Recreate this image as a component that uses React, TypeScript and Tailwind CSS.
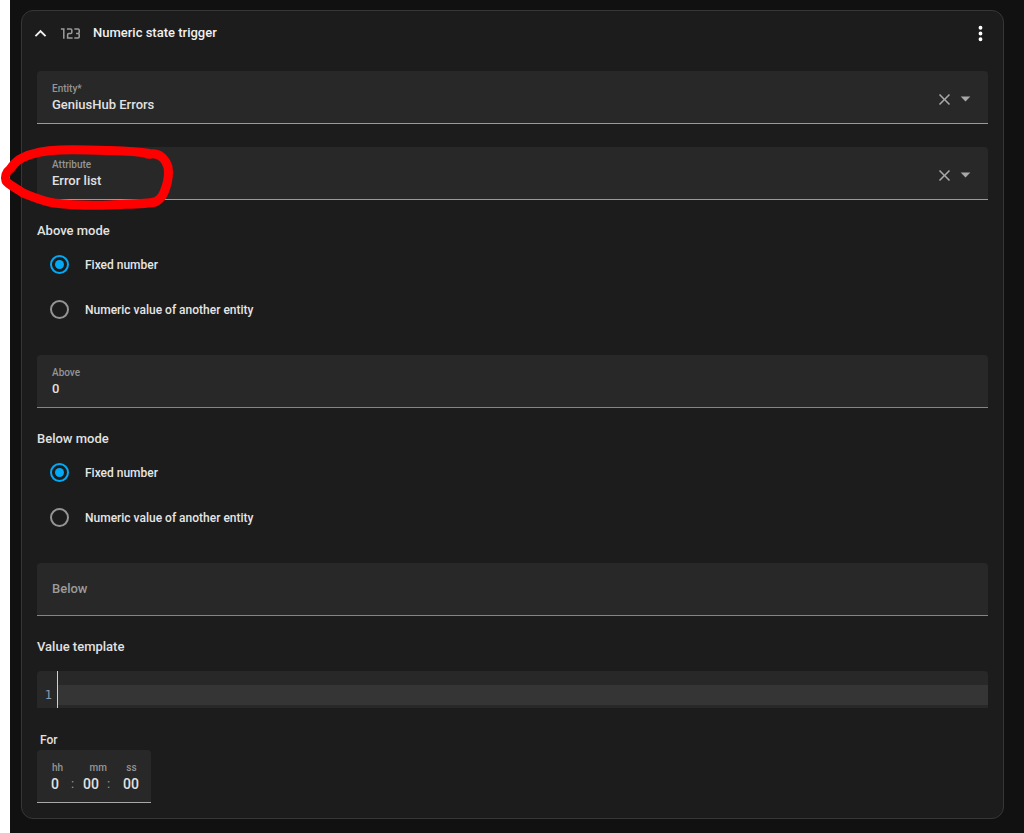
import { useId, useState } from "react";

function Icon({ path, className }: { path: string; className: string }) {
  return (
    <svg viewBox="0 0 24 24" fill="currentColor" aria-hidden="true" className={className}>
      <path d={path} />
    </svg>
  );
}

const icons = {
  chevronUp: "M7.41,15.41L12,10.83L16.59,15.41L18,14L12,8L6,14L7.41,15.41Z",
  dots: "M12,16A2,2 0 0,1 14,18A2,2 0 0,1 12,20A2,2 0 0,1 10,18A2,2 0 0,1 12,16M12,10A2,2 0 0,1 14,12A2,2 0 0,1 12,14A2,2 0 0,1 10,12A2,2 0 0,1 12,10M12,4A2,2 0 0,1 14,6A2,2 0 0,1 12,8A2,2 0 0,1 10,6A2,2 0 0,1 12,4Z",
  close:
    "M19,6.41L17.59,5L12,10.59L6.41,5L5,6.41L10.59,12L5,17.59L6.41,19L12,13.41L17.59,19L19,17.59L13.41,12L19,6.41Z",
  menuDown: "M7,10L12,15L17,10H7Z",
};

function NumericIcon({ className }: { className: string }) {
  return (
    <svg viewBox="0 0 24 24" fill="none" stroke="currentColor" strokeWidth="1.6" aria-hidden="true" className={className}>
      <path d="M2 7.300H5V17.500M8.300 7.300H12.200Q13.400 7.300 13.400 8.500V10.800Q13.400 12 12.200 12H10.200Q9 12 9 13.200V16.700H14.200M16 7.300H19.900Q21.100 7.300 21.100 8.500V10.600Q21.100 11.900 19.600 12H17.800M19.600 12Q21.100 12.100 21.100 13.400V15.500Q21.100 16.700 19.900 16.700H16" />
    </svg>
  );
}

function ComboField({ label, initial }: { label: string; initial: string }) {
  const id = useId();
  const [value, setValue] = useState(initial);
  return (
    <div className="flex h-[53px] items-center rounded-t border-b border-[#9a9a9a] bg-[#282828] pr-[11px] pl-[15px]">
      <div className="flex min-w-0 flex-1 flex-col pb-px">
        <label htmlFor={id} className="text-[10px] leading-4 font-medium text-[#959595]">
          {label}
        </label>
        <input
          id={id}
          value={value}
          onChange={(e) => setValue(e.target.value)}
          className="h-4 w-full bg-transparent text-[13px] leading-4 font-medium text-[#e1e1e1] outline-none"
        />
      </div>
      <button type="button" aria-label="Clear" onClick={() => setValue("")} className="mt-1 text-[#a8a8a8]">
        <Icon path={icons.close} className="size-[19px]" />
      </button>
      <button type="button" aria-label="Open list" className="mt-[3px] text-[#a8a8a8]">
        <Icon path={icons.menuDown} className="size-[23px]" />
      </button>
    </div>
  );
}

function NumberField({ label, initial }: { label: string; initial: string }) {
  const id = useId();
  const [value, setValue] = useState(initial);
  const inputClass =
    "h-4 w-full bg-transparent text-[13px] leading-4 font-medium text-[#e1e1e1] outline-none";
  return (
    <div className="mt-[23px] grid h-[53px] content-center rounded-t border-b border-[#858585] bg-[#282828] px-[15px] pb-px">
      <label
        htmlFor={id}
        className={
          value !== ""
            ? "text-[10px] leading-4 font-medium text-[#959595]"
            : "pointer-events-none col-start-1 row-start-1 text-[13px] leading-4 font-medium text-[#9b9b9b]"
        }
      >
        {label}
      </label>
      <input
        id={id}
        value={value}
        inputMode="numeric"
        onChange={(e) => setValue(e.target.value)}
        className={value !== "" ? inputClass : `col-start-1 row-start-1 ${inputClass}`}
      />
    </div>
  );
}

function ModeGroup({ title, name }: { title: string; name: string }) {
  return (
    <fieldset className="mt-[21px]">
      <legend className="mb-px text-[13px] leading-5 font-medium text-[#e1e1e1]">{title}</legend>
      {["Fixed number", "Numeric value of another entity"].map((option, i) => (
        <label key={option} className="flex h-[45px] items-center gap-4 pl-[13px] text-[12px] font-medium text-[#e6e6e6]">
          <input
            type="radio"
            name={name}
            defaultChecked={i === 0}
            className="grid size-[19px] shrink-0 appearance-none place-items-center rounded-full border-2 border-[#949494] before:size-[9px] before:rounded-full checked:border-[#03a9f4] checked:before:bg-[#03a9f4]"
          />
          {option}
        </label>
      ))}
    </fieldset>
  );
}

function TimePart({
  label,
  name,
  value,
  className,
  align,
}: {
  label: string;
  name: string;
  value: string;
  className: string;
  align: string;
}) {
  return (
    <label className={`flex flex-col ${className}`}>
      <span className={`text-[10px] leading-4 font-medium text-[#959595] ${align}`}>{label}</span>
      <input
        aria-label={name}
        defaultValue={value}
        className="h-4 w-full bg-transparent text-[14px] leading-4 font-medium text-[#e1e1e1] outline-none"
      />
    </label>
  );
}

export default function App() {
  return (
    <div className="relative min-h-screen bg-white pl-2.5 font-['Roboto',sans-serif]">
      <main className="min-h-screen bg-[#111111] pt-2.5 pr-5 pb-3.5 pl-[11px]">
        <section className="rounded-xl border border-[#363636] bg-[#1c1c1c]">
          <header className="flex h-[45px] items-center pr-[11px] pl-[7px]">
            <button type="button" aria-label="Collapse" className="text-[#f0f0f0]">
              <Icon path={icons.chevronUp} className="size-[23px]" />
            </button>
            <NumericIcon className="ml-[7px] size-[23px] text-[#9b9b9b]" />
            <h1 className="mb-0.5 ml-[11px] flex-1 text-[13px] leading-5 font-medium text-[#f0f0f0]">Numeric state trigger</h1>
            <button type="button" aria-label="More options" className="text-white">
              <Icon path={icons.dots} className="size-[23px]" />
            </button>
          </header>

          <form className="p-[15px]">
            <div className="flex flex-col gap-[23px]">
              <ComboField label="Entity*" initial="GeniusHub Errors" />
              <ComboField label="Attribute" initial="Error list" />
            </div>

            <ModeGroup title="Above mode" name="above-mode" />
            <NumberField label="Above" initial="0" />

            <ModeGroup title="Below mode" name="below-mode" />
            <NumberField label="Below" initial="" />

            <label htmlFor="value-template" className="mt-[21px] block text-[13px] leading-5 font-medium text-[#e1e1e1]">
              Value template
            </label>
            <div className="mt-3.5 flex h-[37px] overflow-hidden rounded-t bg-[#282828] font-['DejaVu_Sans_Mono',monospace] text-[12px]">
              <div className="w-[21px] border-r border-[#d0d0d0] pt-[14px] pr-[5px] text-right leading-5 text-[#8d9aa8]">1</div>
              <div className="flex-1 pt-[14px]">
                <textarea
                  id="value-template"
                  rows={1}
                  className="block h-5 w-full resize-none overflow-hidden bg-[#353535] px-1 leading-5 text-[#e1e1e1] outline-none"
                />
              </div>
            </div>

            <fieldset className="mt-[23px]">
              <legend className="mb-px pl-[3px] text-[12px] leading-[18px] font-medium text-[#e1e1e1]">For</legend>
              <div className="flex h-[53px] w-[114px] items-center rounded-t border-b border-[#a8a8a8] bg-[#282828] pb-px pl-3.5">
                <TimePart label="hh" name="Hours" value="0" className="w-5" align="pl-px" />
                <span className="mt-4 w-3 text-[13px] leading-4 text-[#9b9b9b]">:</span>
                <TimePart label="mm" name="Minutes" value="00" className="w-6" align="text-right" />
                <span className="mt-4 w-4 text-[13px] leading-4 text-[#9b9b9b]">:</span>
                <TimePart label="ss" name="Seconds" value="00" className="w-[17px]" align="text-center" />
              </div>
            </fieldset>
          </form>
        </section>
      </main>

      <svg
        viewBox="0 0 180 72"
        fill="none"
        stroke="#ff0000"
        strokeWidth="9"
        strokeLinecap="round"
        strokeLinejoin="round"
        aria-hidden="true"
        className="pointer-events-none absolute top-[142px] left-0 h-[72px] w-[180px]"
      >
        <path d="M149 11.500C138 9.500 128 9 110 8.500C92 8 76 7.500 60 8C42 8.500 32 11 22 16C14 20 13 24 10 27C6 30 4.500 35 6 39C9 43 16 46 23 51C33 55 42 59 54 61C70 63 95 63.500 110 63C130 62 146 62 155 60C162 57 164 51 166 45C168 39 169 31 168 25C166 18 161 13 155 12C152 11 150 13 147 12" />
      </svg>
    </div>
  );
}
